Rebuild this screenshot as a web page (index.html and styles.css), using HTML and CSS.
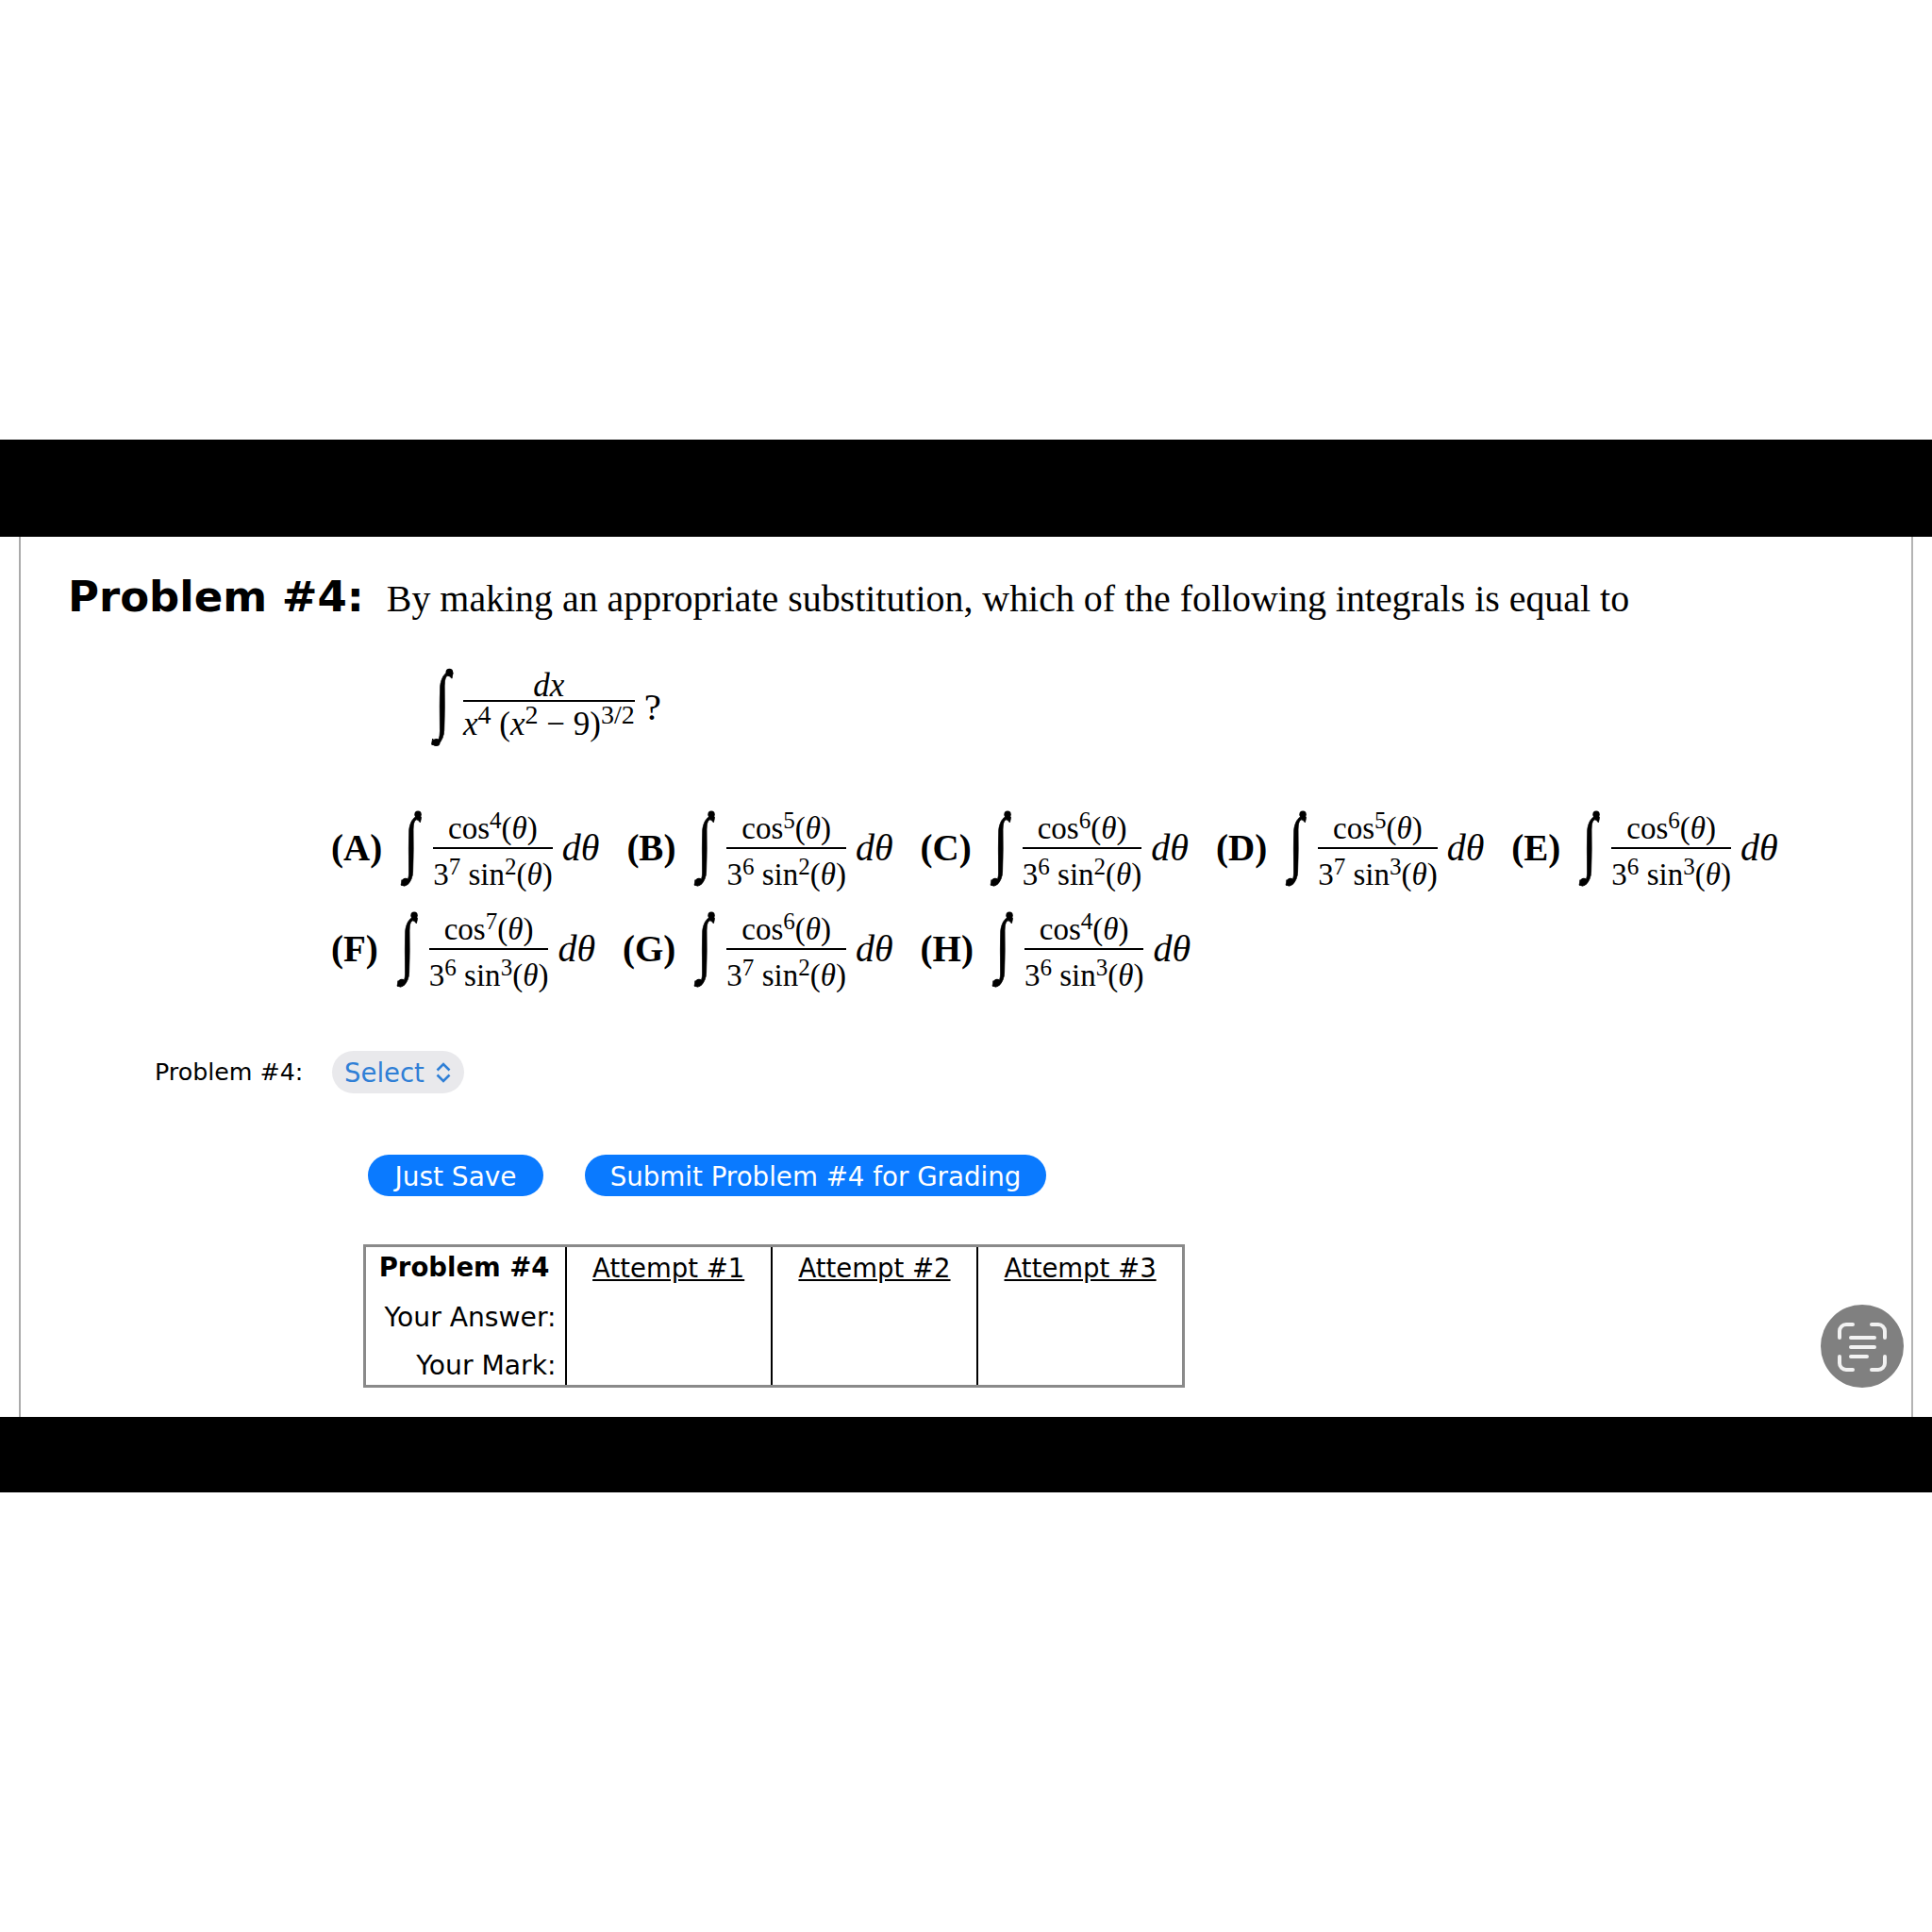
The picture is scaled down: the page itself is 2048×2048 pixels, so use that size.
FILE: index.html
```html
<!DOCTYPE html>
<html lang="en">
<head>
<meta charset="utf-8">
<title>Problem #4</title>
<link rel="stylesheet" href="styles.css">
</head>
<body>
<div class="blank-top"></div>
<div class="bar bar-top"></div>
<main class="panel">
  <div class="question">
    <h1 class="heading">Problem #4:</h1>
    <p class="prompt">By making an appropriate substitution, which of the following integrals is equal to</p>
  </div>
  <div class="display">
    <span class="int int-display">∫</span>
    <span class="frac frac-display">
      <span class="num"><i>dx</i></span>
      <span class="den"><i>x</i><sup>4</sup> (<i>x</i><sup>2</sup> − 9)<sup>3/2</sup></span>
    </span>
    <span class="qmark">?</span>
  </div>
  <div class="options">
    <div class="row">
      <div class="opt"><b class="label">(A)</b><span class="int">∫</span><span class="frac"><span class="num">cos<sup>4</sup>(<i>θ</i>)</span><span class="den">3<sup>7</sup> sin<sup>2</sup>(<i>θ</i>)</span></span><i class="dt">dθ</i></div>
      <div class="opt"><b class="label">(B)</b><span class="int">∫</span><span class="frac"><span class="num">cos<sup>5</sup>(<i>θ</i>)</span><span class="den">3<sup>6</sup> sin<sup>2</sup>(<i>θ</i>)</span></span><i class="dt">dθ</i></div>
      <div class="opt"><b class="label">(C)</b><span class="int">∫</span><span class="frac"><span class="num">cos<sup>6</sup>(<i>θ</i>)</span><span class="den">3<sup>6</sup> sin<sup>2</sup>(<i>θ</i>)</span></span><i class="dt">dθ</i></div>
      <div class="opt"><b class="label">(D)</b><span class="int">∫</span><span class="frac"><span class="num">cos<sup>5</sup>(<i>θ</i>)</span><span class="den">3<sup>7</sup> sin<sup>3</sup>(<i>θ</i>)</span></span><i class="dt">dθ</i></div>
      <div class="opt"><b class="label">(E)</b><span class="int">∫</span><span class="frac"><span class="num">cos<sup>6</sup>(<i>θ</i>)</span><span class="den">3<sup>6</sup> sin<sup>3</sup>(<i>θ</i>)</span></span><i class="dt">dθ</i></div>
    </div>
    <div class="row">
      <div class="opt"><b class="label">(F)</b><span class="int">∫</span><span class="frac"><span class="num">cos<sup>7</sup>(<i>θ</i>)</span><span class="den">3<sup>6</sup> sin<sup>3</sup>(<i>θ</i>)</span></span><i class="dt">dθ</i></div>
      <div class="opt"><b class="label">(G)</b><span class="int">∫</span><span class="frac"><span class="num">cos<sup>6</sup>(<i>θ</i>)</span><span class="den">3<sup>7</sup> sin<sup>2</sup>(<i>θ</i>)</span></span><i class="dt">dθ</i></div>
      <div class="opt"><b class="label">(H)</b><span class="int">∫</span><span class="frac"><span class="num">cos<sup>4</sup>(<i>θ</i>)</span><span class="den">3<sup>6</sup> sin<sup>3</sup>(<i>θ</i>)</span></span><i class="dt">dθ</i></div>
    </div>
  </div>
  <div class="answer">
    <span class="answer-label">Problem #4:</span>
    <div class="select">
      <span>Select</span>
      <svg class="chevrons" viewBox="0 0 18 24" aria-hidden="true"><path d="M2.5 9.5 9 3l6.5 6.5M2.5 14.5 9 21l6.5-6.5"/></svg>
    </div>
  </div>
  <div class="actions">
    <button class="btn btn-save">Just Save</button>
    <button class="btn btn-submit">Submit Problem #4 for Grading</button>
  </div>
  <table class="attempts">
    <tr class="row-head">
      <th class="head">Problem #4</th>
      <td class="col" rowspan="3"><a>Attempt #1</a></td>
      <td class="col" rowspan="3"><a>Attempt #2</a></td>
      <td class="col" rowspan="3"><a>Attempt #3</a></td>
    </tr>
    <tr class="row-answer"><td class="side">Your Answer:</td></tr>
    <tr class="row-mark"><td class="side">Your Mark:</td></tr>
  </table>
  <div class="fab">
    <svg viewBox="0 0 88 88" aria-hidden="true">
      <circle class="fab-bg" cx="44" cy="44" r="44"/>
      <path class="fab-line" d="M20 35v-7a7 7 0 0 1 7-7h7M54 21h7a7 7 0 0 1 7 7v7M20 55v7a7 7 0 0 0 7 7h7M54 69h7a7 7 0 0 0 7-7v-7M32 35h25M32 45h25M32 55h17"/>
    </svg>
  </div>
</main>
<div class="bar bar-bottom"></div>
</body>
</html>
```
FILE: styles.css
```css
* { box-sizing: border-box; }
html, body { margin: 0; padding: 0; background: #fff; }
body { width: 2048px; height: 2048px; overflow: hidden; color: #000; font-family: "Liberation Serif", serif; }
.blank-top { height: 466px; }
.bar { background: #000; }
.bar-top { height: 103px; }
.bar-bottom { height: 80px; }
.panel {
  position: relative;
  height: 933px;
  margin-left: 20px;
  width: 2008px;
  border-left: 2px solid #aaa;
  border-right: 2px solid #b4b4b4;
}
.question { display: flex; align-items: baseline; padding: 36px 0 0 50px; gap: 24px; }
.heading { margin: 0; font: bold 45px/56px "DejaVu Sans", sans-serif; }
.prompt { margin: 0; font-size: 39.9px; line-height: 56px; }
.display { display: flex; align-items: flex-start; margin: 39px 0 0 437px; height: 98px; }
.int {
  position: relative;
  display: block;
  width: 21px;
  font-size: 70px;
  line-height: 82px;
  -webkit-text-stroke: .7px #000;
  transform: translateY(-5px) scale(.82, 1.08);
}
.int::before, .int::after { content: ""; position: absolute; width: 9px; height: 7px; border-radius: 50%; background: #000; }
.int::before { top: 9px; right: -2px; }
.int::after { bottom: 0; left: -2px; }
.int-display { margin-right: 11px; transform: scale(.86, 1.14); }
.int-display::before { top: 11px; }
.int-display::after { bottom: -1px; }
.frac { display: inline-flex; flex-direction: column; align-items: center; font-size: 33px; }
.frac sup { font-size: .76em; line-height: 0; vertical-align: .44em; }
.num { display: block; width: 100%; text-align: center; line-height: 40px; border-bottom: 2.5px solid #000; padding: 0 1px; }
.den { display: block; line-height: 40px; padding-top: 7px; white-space: nowrap; }
.frac-display { font-size: 35px; }
.frac-display sup { font-size: .8em; }
.frac-display .num { padding-top: 10px; line-height: 30px; }
.frac-display .den { padding-top: 4px; }
.qmark { font-size: 41px; margin-left: 10px; padding-top: 22px; line-height: 50px; }
.options { margin: 58px 0 0 329px; display: flex; flex-direction: column; gap: 18px; }
.row { display: flex; gap: 29px; }
.opt { display: flex; align-items: flex-start; height: 89px; }
.label { font-size: 39px; line-height: 82px; margin-right: 21px; }
.opt .frac { margin-left: 12px; }
.dt { font-size: 40px; line-height: 82px; margin-left: 10px; }
.answer { display: flex; align-items: center; margin: 60px 0 0 142px; font-family: "DejaVu Sans", sans-serif; }
.answer-label { font-size: 25.3px; width: 188px; }
.select { display: flex; align-items: center; gap: 11px; width: 140px; height: 45px; padding-left: 13px; border-radius: 23px; background: #e9e9ec; color: #2f7fd6; font-size: 27.5px; }
.chevrons { width: 18px; height: 24px; fill: none; stroke: #2f7fd6; stroke-width: 2.6; }
.actions { display: flex; gap: 44px; margin: 65px 0 0 368px; }
.btn { border: 0; height: 44px; padding: 2px 0 0; border-radius: 22px; background: #0a7aff; color: #fff; font: 28px "DejaVu Sans", sans-serif; }
.btn-save { width: 186px; }
.btn-submit { width: 489px; font-size: 27.7px; }
.attempts { margin: 51px 0 0 363px; width: 871px; height: 152px; border-collapse: collapse; border: 3px solid #8a8a8a; font: 27.5px/1 "DejaVu Sans", sans-serif; table-layout: fixed; }
.attempts th, .attempts td { padding: 0; }
.row-head { height: 45px; }
.row-answer { height: 61px; }
.row-mark { height: 41px; }
.head { width: 213px; text-align: right; padding-right: 16px !important; font-weight: bold; }
.side { text-align: right; padding-right: 9px !important; font-size: 28.2px; }
.col { vertical-align: top; text-align: center; border-left: 2.5px solid #000; line-height: 44px; }
.col a { text-decoration: underline; }
.fab { position: absolute; left: 1908px; top: 814px; width: 88px; height: 88px; }
.fab svg { display: block; width: 88px; height: 88px; }
.fab-bg { fill: #808080; }
.fab-line { fill: none; stroke: #f2f2f2; stroke-width: 4; stroke-linecap: round; }
```
